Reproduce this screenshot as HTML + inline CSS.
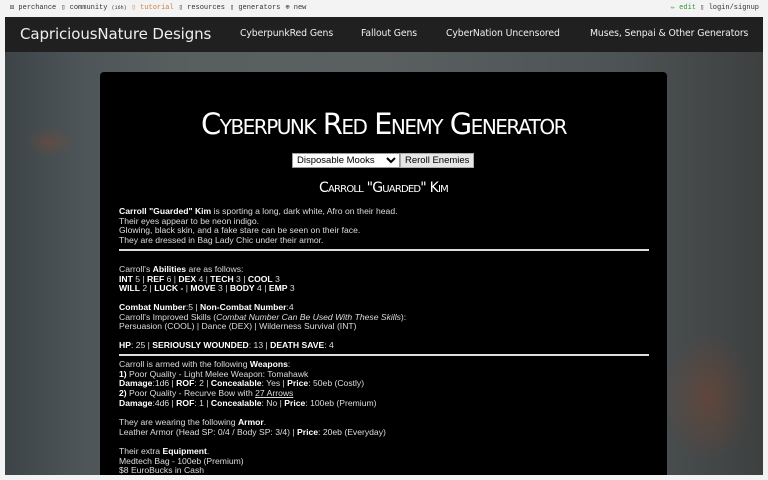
<!DOCTYPE html>
<html><head><meta charset="utf-8"><style>
*{margin:0;padding:0;box-sizing:border-box}
body{width:768px;height:480px;overflow:hidden;background:#f3f3f3;font-family:"Liberation Sans",Arial,sans-serif;position:relative}
.top{position:absolute;top:3px;left:10px;font-family:"Liberation Mono",monospace;font-size:7px;color:#333;white-space:nowrap}
.top span{margin-right:5px}
.topr{position:absolute;top:3px;right:9px;font-family:"Liberation Mono",monospace;font-size:7px;color:#333}
.nav{position:absolute;left:5px;top:17px;width:758px;height:35px;background:#202020;color:#eee;font-family:"DejaVu Sans",sans-serif}
.nav div{position:absolute;top:11px;font-size:9.3px;white-space:nowrap;letter-spacing:-0.1px}
.bg{position:absolute;left:5px;top:52px;width:758px;height:423px;
background:linear-gradient(90deg,#3c4447 0%,#4d5558 10%,#58605f 25%,#5a5f60 50%,#4e5456 80%,#3e4040 100%)}
.bg .o1{position:absolute;left:20px;top:75px;width:50px;height:30px;background:radial-gradient(rgba(122,74,53,.5),transparent 70%)}
.bg .o2{position:absolute;right:10px;top:280px;width:90px;height:130px;background:radial-gradient(rgba(122,69,48,.5),transparent 70%)}
.panel{position:absolute;left:100px;top:72px;width:567px;height:403px;background:#000;border-radius:4px 4px 0 0;color:#e8e8e8}
h1{position:absolute;top:35px;left:0;width:100%;text-align:center;font-family:"DejaVu Sans",sans-serif;font-variant:small-caps;font-weight:normal;font-size:29px;letter-spacing:-1.5px;color:#fff}
.ctl{position:absolute;top:81px;left:192px}
select{width:108px;height:15px;font-size:9.5px;font-family:"Liberation Sans";background:#fff;border:1px solid #999;vertical-align:top}
button{height:15px;font-size:9.5px;padding:0 4px;font-family:"Liberation Sans";background:#e6e6e6;border:1px solid #aaa;vertical-align:top}
h2{position:absolute;top:108px;left:0;width:100%;text-align:center;font-family:"DejaVu Sans",sans-serif;font-variant:small-caps;font-weight:normal;font-size:14px;letter-spacing:-0.8px;color:#fff}
.t{position:absolute;left:19px;font-size:8.6px;line-height:9.7px;white-space:nowrap;color:#ddd}
.t b{color:#fff}
hr{position:absolute;left:19px;width:530px;border:0;height:1.5px;background:#ddd}
</style></head><body>
<div class="top"><span>⚄ perchance</span><span>▯ community <small style="font-size:5px">(16h)</small></span><span style="color:#d08040">▯ tutorial</span><span>▯ resources</span><span>▯ generators</span><span>⊕ new</span></div>
<div class="topr"><span style="color:#393">✏ edit</span> ▯ login/signup</div>
<div class="nav">
<div style="left:15px;top:8px;font-size:15px">CapriciousNature Designs</div>
<div style="left:235px">CyberpunkRed Gens</div>
<div style="left:356px">Fallout Gens</div>
<div style="left:441px">CyberNation Uncensored</div>
<div style="left:585px">Muses, Senpai &amp; Other Generators</div>
</div>
<div class="bg"><div class="o1"></div><div class="o2"></div></div>
<div class="panel">
<h1>Cyberpunk Red Enemy Generator</h1>
<div class="ctl"><select><option>Disposable Mooks</option></select><button>Reroll Enemies</button></div>
<h2>Carroll "Guarded" Kim</h2>
<div class="t" style="top:135px"><b>Carroll "Guarded" Kim</b> is sporting a long, dark white, Afro on their head.<br>Their eyes appear to be neon indigo.<br>Glowing, black skin, and a fake stare can be seen on their face.<br>They are dressed in Bag Lady Chic under their armor.</div>
<hr style="top:177px">
<div class="t" style="top:193px">Carroll's <b>Abilities</b> are as follows:<br><b>INT</b> 5 | <b>REF</b> 6 | <b>DEX</b> 4 | <b>TECH</b> 3 | <b>COOL</b> 3<br><b>WILL</b> 2 | <b>LUCK -</b> | <b>MOVE</b> 3 | <b>BODY</b> 4 | <b>EMP</b> 3</div>
<div class="t" style="top:231px"><b>Combat Number</b>:5 | <b>Non-Combat Number</b>:4<br>Carroll's Improved Skills (<i>Combat Number Can Be Used With These Skills</i>):<br>Persuasion (COOL) | Dance (DEX) | Wilderness Survival (INT)</div>
<div class="t" style="top:269px"><b>HP</b>: 25 | <b>SERIOUSLY WOUNDED</b>: 13 | <b>DEATH SAVE</b>: 4</div>
<hr style="top:282px">
<div class="t" style="top:288px">Carroll is armed with the following <b>Weapons</b>:<br><b>1)</b> Poor Quality - Light Melee Weapon: Tomahawk<br><b>Damage</b>:1d6 | <b>ROF</b>: 2 | <b>Concealable</b>: Yes | <b>Price</b>: 50eb (Costly)<br><b>2)</b> Poor Quality - Recurve Bow with <u>27 Arrows</u><br><b>Damage</b>:4d6 | <b>ROF</b>: 1 | <b>Concealable</b>: No | <b>Price</b>: 100eb (Premium)</div>
<div class="t" style="top:346px">They are wearing the following <b>Armor</b>.<br>Leather Armor (Head SP: 0/4 / Body SP: 3/4) | <b>Price</b>: 20eb (Everyday)</div>
<div class="t" style="top:375px">Their extra <b>Equipment</b>.<br>Medtech Bag - 100eb (Premium)<br>$8 EuroBucks in Cash</div>
</div>
</body></html>
